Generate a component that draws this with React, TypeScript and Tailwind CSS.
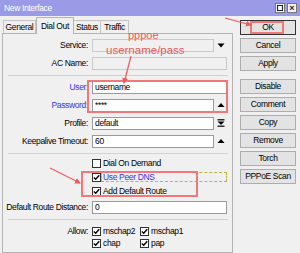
import React from "react";

type Kind = "down" | "up" | "list";

function Arrow({ kind }: { kind: Kind }) {
  return (
    <div className="flex w-[13px] items-center justify-center">
      <svg width="8" height="8" viewBox="0 0 8 8">
        {kind === "down" && <path d="M0.5 2.5h7L4 6.5z" fill="#000" />}
        {kind === "up" && <path d="M0.5 6h7L4 2z" fill="#000" />}
        {kind === "list" && (
          <>
            <path d="M0.5 0.8h7" stroke="#000" strokeWidth="1.2" />
            <path d="M0.5 2.5h7L4 6z" fill="#000" />
            <path d="M0.5 7.2h7" stroke="#000" strokeWidth="1.2" />
          </>
        )}
      </svg>
    </div>
  );
}

function Row({
  label,
  value,
  blue,
  disabled,
  arrow,
}: {
  label: string;
  value?: string;
  blue?: boolean;
  disabled?: boolean;
  arrow?: Kind;
}) {
  return (
    <div className="flex h-[18px] items-center">
      <span className={`w-[85px] shrink-0 whitespace-nowrap text-right ${blue ? "text-[#3535e8]" : ""}`}>
        {label}
      </span>
      <div
        className={`ml-[4px] flex h-[13px] items-center border px-[2px] ${
          arrow ? "w-[122px]" : "w-[135px]"
        } ${disabled ? "border-[#c9c9c9] bg-[#f0f0f0]" : "border-[#9a9a9a] bg-white"}`}
      >
        {value}
      </div>
      {arrow && <Arrow kind={arrow} />}
    </div>
  );
}

function Check({ on = true }: { on?: boolean }) {
  return (
    <div className="flex h-[9px] w-[9px] shrink-0 items-center justify-center border border-[#333] bg-white">
      {on && (
        <svg width="7" height="7" viewBox="0 0 7 7">
          <path d="M0.8 3.4L2.7 5.3L6.2 1.3" fill="none" stroke="#000" strokeWidth="1.4" />
        </svg>
      )}
    </div>
  );
}

function Sep({ mb }: { mb: "2" | "5" }) {
  return (
    <div className={`ml-[5px] mr-[4px] mt-[3px] h-px bg-[#d2d2d2] ${mb === "2" ? "mb-[2px]" : "mb-[5px]"}`} />
  );
}

function Btn({ children, def }: { children: React.ReactNode; def?: boolean }) {
  return (
    <div
      className={`flex h-[15px] items-center justify-center whitespace-nowrap border bg-[#e3e3e3] ${
        def ? "border-[#333]" : "border-[#adadad]"
      }`}
    >
      {children}
    </div>
  );
}

export default function App() {
  return (
    <div className="relative h-[253px] w-[300px] overflow-hidden bg-[#f0f0f0] font-['Liberation_Sans',Arial,sans-serif] text-[8.5px] leading-none tracking-[-0.35px] text-black">
      {/* title bar */}
      <div className="flex h-[16px] items-center bg-[#9a9ae6] pl-[4px] pr-[3px] text-white">
        <span className="flex-1">New Interface</span>
        <div className="flex gap-[2px]">
          <div className="flex h-[10px] w-[10px] items-center justify-center border border-[#777] bg-[#f2f2f2]">
            <div className="h-[6px] w-[6px] border border-[#222]" />
          </div>
          <div className="flex h-[10px] w-[10px] items-center justify-center border border-[#777] bg-[#f2f2f2] text-[9px] font-bold tracking-normal text-[#222]">
            ×
          </div>
        </div>
      </div>

      <div className="flex h-[237px]">
        {/* left: tabs + panel */}
        <div className="ml-[2px] flex w-[231px] flex-col">
          <div className="mt-[1px] flex h-[16px] items-end pl-[1px]">
            <div className="flex h-[13px] w-[33px] items-center justify-center border border-b-0 border-[#c4c4c4]">
              General
            </div>
            <div className="relative z-10 -mb-px flex h-[17px] w-[38px] items-center justify-center border border-b-0 border-[#b4b4b4] bg-[#f0f0f0]">
              Dial Out
            </div>
            <div className="flex h-[13px] w-[27px] items-center justify-center border border-b-0 border-l-0 border-[#c4c4c4]">
              Status
            </div>
            <div className="flex h-[13px] w-[28px] items-center justify-center border border-b-0 border-l-0 border-[#c4c4c4]">
              Traffic
            </div>
          </div>

          <div className="flex-1 border border-[#b4b4b4] pt-[2px]">
            <Row label="Service:" disabled arrow="down" />
            <Row label="AC Name:" disabled />
            <Sep mb="2" />
            <Row label="User:" value="username" blue />
            <Row label="Password:" value="****" blue arrow="up" />
            <Row label="Profile:" value="default" arrow="list" />
            <Row label="Keepalive Timeout:" value="60" arrow="up" />
            <Sep mb="2" />

            <div className="ml-[89px] flex h-[14px] items-center">
              <Check on={false} />
              <span className="ml-[2px]">Dial On Demand</span>
            </div>
            <div className="ml-[89px] flex h-[14px] items-center">
              <Check />
              <span className="flex h-[10px] w-[126px] items-center border border-dashed border-[#b8b840] pl-[1px] text-[#3535e8]">
                Use Peer DNS
              </span>
            </div>
            <div className="ml-[89px] flex h-[14px] items-center">
              <Check />
              <span className="ml-[2px]">Add Default Route</span>
            </div>

            <Row label="Default Route Distance:" value="0" />
            <Sep mb="5" />

            <div className="flex">
              <span className="h-[12px] w-[85px] shrink-0 text-right leading-[12px]">Allow:</span>
              <div className="ml-[4px] grid grid-cols-[48px_48px]">
                {["mschap2", "mschap1", "chap", "pap"].map((p) => (
                  <div key={p} className="flex h-[12px] items-center">
                    <Check />
                    <span className="ml-[2px]">{p}</span>
                  </div>
                ))}
              </div>
            </div>
          </div>
        </div>

        {/* right: buttons */}
        <div className="ml-[7px] flex w-[56px] flex-col gap-[3px] pt-[4px]">
          <Btn def>OK</Btn>
          <Btn>Cancel</Btn>
          <Btn>Apply</Btn>
          <div className="mt-[5px] flex flex-col gap-[3px]">
            <Btn>Disable</Btn>
            <Btn>Comment</Btn>
            <Btn>Copy</Btn>
            <Btn>Remove</Btn>
            <Btn>Torch</Btn>
            <Btn>PPPoE Scan</Btn>
          </div>
        </div>
      </div>

      {/* annotations */}
      <div className="absolute left-[250px] top-[21px] h-[13px] w-[34px] border-2 border-[#f07878]" />
      <div className="absolute left-[87px] top-[80px] h-[33px] w-[141px] border-2 border-[#f07878]" />
      <div className="absolute left-[81px] top-[171px] h-[26px] w-[117px] border-2 border-[#f07878]" />
      <div className="absolute left-[128px] top-[29px] text-[11px] leading-[12px] tracking-normal text-[#e85a5a]">
        pppoe
      </div>
      <div className="absolute left-[106px] top-[44px] text-[11.5px] leading-[12px] tracking-normal text-[#e85a5a]">
        username/pass
      </div>
      <svg className="pointer-events-none absolute inset-0" width="300" height="253">
        <defs>
          <marker id="ah" markerWidth="6" markerHeight="6" refX="5" refY="3" orient="auto" markerUnits="userSpaceOnUse">
            <path d="M0 0L6 3L0 6z" fill="#ec5c5c" />
          </marker>
        </defs>
        <line x1="225" y1="18" x2="251" y2="25" stroke="#ec5c5c" strokeWidth="1.2" markerEnd="url(#ah)" />
        <line x1="131" y1="56" x2="124" y2="83" stroke="#ec5c5c" strokeWidth="1.2" markerEnd="url(#ah)" />
        <line x1="50" y1="168" x2="80" y2="183" stroke="#ec5c5c" strokeWidth="1.2" markerEnd="url(#ah)" />
      </svg>
    </div>
  );
}
